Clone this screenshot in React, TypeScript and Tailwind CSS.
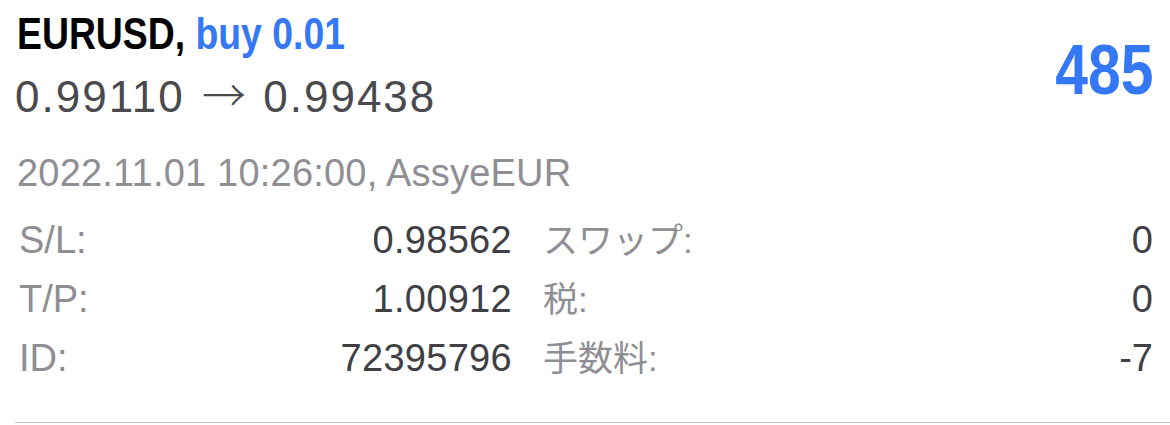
export default function App() {
  const rows = [
    { label: 'S/L:', value: '0.98562', jp: 'スワップ:', right: '0' },
    { label: 'T/P:', value: '1.00912', jp: '税:', right: '0' },
    { label: 'ID:', value: '72395796', jp: '手数料:', right: '-7' },
  ]

  return (
    <div className="w-[1170px] h-[425px] bg-white overflow-hidden font-['Liberation_Sans','Noto_Sans_CJK_JP',sans-serif]">
      <div className="flex justify-between pl-[17px] pr-[17px]">
        <div className="flex flex-col">
          <div className="pt-[9px] text-[45px] leading-[50px] font-bold text-black whitespace-nowrap origin-left scale-x-[0.83]">
            EURUSD, <span className="text-[#3478f6]">buy 0.01</span>
          </div>
          <div className="mt-[10px] h-[56px] -ml-[2px] text-[44px] leading-[56px] tracking-[2px] text-[#4a4a4e] whitespace-nowrap">
            0.99110{' '}
            <span className="mx-[3px] font-['Noto_Sans_CJK_JP',sans-serif] font-light leading-none tracking-normal">→</span>{' '}
            0.99438
          </div>
        </div>
        <div className="pt-[34px] text-[71px] leading-[71px] font-bold text-[#3478f6] origin-right scale-x-[0.83]">
          485
        </div>
      </div>

      <div className="mt-[25px] pl-[17px] text-[38px] leading-[46px] tracking-[0.2px] text-[#8e8e93] whitespace-nowrap">
        2022.11.01 10:26:00, AssyeEUR
      </div>

      <div className="mt-[15px] pl-[19px] pr-[17px] grid grid-cols-[493px_1fr] gap-x-[31px]">
        {rows.map((r) => (
          <div key={r.label} className="contents">
            <div className="flex justify-between text-[38px] leading-[58px]">
              <span className="text-[#8e8e93]">{r.label}</span>
              <span className="text-[#404044] tracking-[0.3px]">{r.value}</span>
            </div>
            <div className="flex justify-between items-baseline leading-[58px]">
              <span className="text-[35px] text-[#8e8e93]">{r.jp}</span>
              <span className="text-[38px] text-[#404044]">{r.right}</span>
            </div>
          </div>
        ))}
      </div>

      <div className="mt-[34px] ml-[15px] h-px bg-[#c6c6c8]" />
    </div>
  )
}
